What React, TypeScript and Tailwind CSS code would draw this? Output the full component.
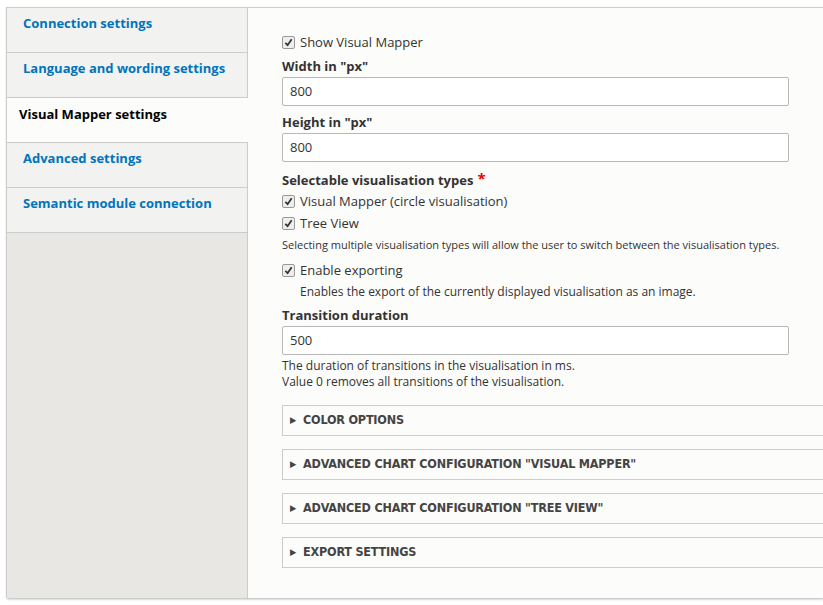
import React from "react";

const Cb = ({ label }: { label: string }) => (
  <div className="flex items-center h-[22px] text-[13px] text-[#333]">
    <span className="w-[13px] h-[13px] border border-[#999] rounded-[2px] bg-[#eee] flex items-center justify-center mr-[5px] mt-[-2px]">
      <svg width="9" height="9" viewBox="0 0 10 10"><path d="M1.5 5.5 L4 8 L8.5 1.5" stroke="#333" strokeWidth="2" fill="none" /></svg>
    </span>
    {label}
  </div>
);

const Label = ({ children }: { children: React.ReactNode }) => (
  <div className="text-[13px] font-bold text-[#333] h-[20px] flex items-center">{children}</div>
);

const Input = ({ v }: { v: string }) => (
  <div className="w-[507px] h-[29px] border border-[#b8b8b8] bg-white rounded-[2px] px-[7px] flex items-center text-[13px] text-[#333]">{v}</div>
);

const Details = ({ t }: { t: string }) => (
  <div className="h-[31px] border border-[#ccc] border-r-0 bg-[#fcfcfa] flex items-center pl-[7px] mb-[13px] text-[12.5px] font-bold text-[#444] tracking-[-0.2px]" style={{ fontFamily: '"DejaVu Sans Condensed", "DejaVu Sans", sans-serif' }}>
    <span className="text-[9px] mr-[7px]">▶</span>{t}
  </div>
);

export default function App() {
  const tabs = ["Connection settings", "Language and wording settings", "Visual Mapper settings", "Advanced settings", "Semantic module connection"];
  return (
    <div className="w-[823px] h-[605px] bg-white pt-[7px] pl-[6px] overflow-hidden" style={{ fontFamily: '"Open Sans", Verdana, sans-serif' }}>
      <div className="flex h-[592px] border border-[#ccc] border-r-0 rounded-bl-[3px] shadow-[0_1px_2px_rgba(0,0,0,0.15)]">
        <div className="w-[241px] shrink-0 bg-[#e8e7e3] border-r border-[#ccc]">
          {tabs.map((t, i) => (
            <div key={t} className={i === 2 ? "h-[45px] bg-[#fcfcfa] border-b border-[#ccc] mr-[-1px] pl-[12px] pt-[7px] text-[13px] font-bold text-black relative whitespace-nowrap" : "h-[45px] bg-[#f2f2f0] border-b border-[#ccc] pl-[16px] pt-[6px] text-[13px] font-bold text-[#0074bd] whitespace-nowrap"}>{t}</div>
          ))}
        </div>
        <div className="flex-1 bg-[#fcfcfa] pl-[34px] pt-[24px]">
          <Cb label="Show Visual Mapper" />
          <div className="mt-[3px]"><Label>Width in "px"</Label></div>
          <Input v="800" />
          <div className="mt-[7px]"><Label>Height in "px"</Label></div>
          <Input v="800" />
          <div className="mt-[9px]"><Label>Selectable visualisation types <span className="text-[#e00] text-[15px] relative top-[-3px] ml-[4px]">*</span></Label></div>
          <Cb label="Visual Mapper (circle visualisation)" />
          <Cb label="Tree View" />
          <div className="text-[11px] text-[#333] h-[20px] flex items-center whitespace-nowrap">Selecting multiple visualisation types will allow the user to switch between the visualisation types.</div>
          <div className="mt-[5px]"><Cb label="Enable exporting" /></div>
          <div className="text-[12px] text-[#333] pl-[18px] h-[20px] flex items-center">Enables the export of the currently displayed visualisation as an image.</div>
          <div className="mt-[4px]"><Label>Transition duration</Label></div>
          <Input v="500" />
          <div className="text-[12px] text-[#333] leading-[16px] mt-[3px]">The duration of transitions in the visualisation in ms.<br />Value 0 removes all transitions of the visualisation.</div>
          <div className="mt-[15px]">
            <Details t="COLOR OPTIONS" />
            <Details t={'ADVANCED CHART CONFIGURATION "VISUAL MAPPER"'} />
            <Details t={'ADVANCED CHART CONFIGURATION "TREE VIEW"'} />
            <Details t="EXPORT SETTINGS" />
          </div>
        </div>
      </div>
    </div>
  );
}
